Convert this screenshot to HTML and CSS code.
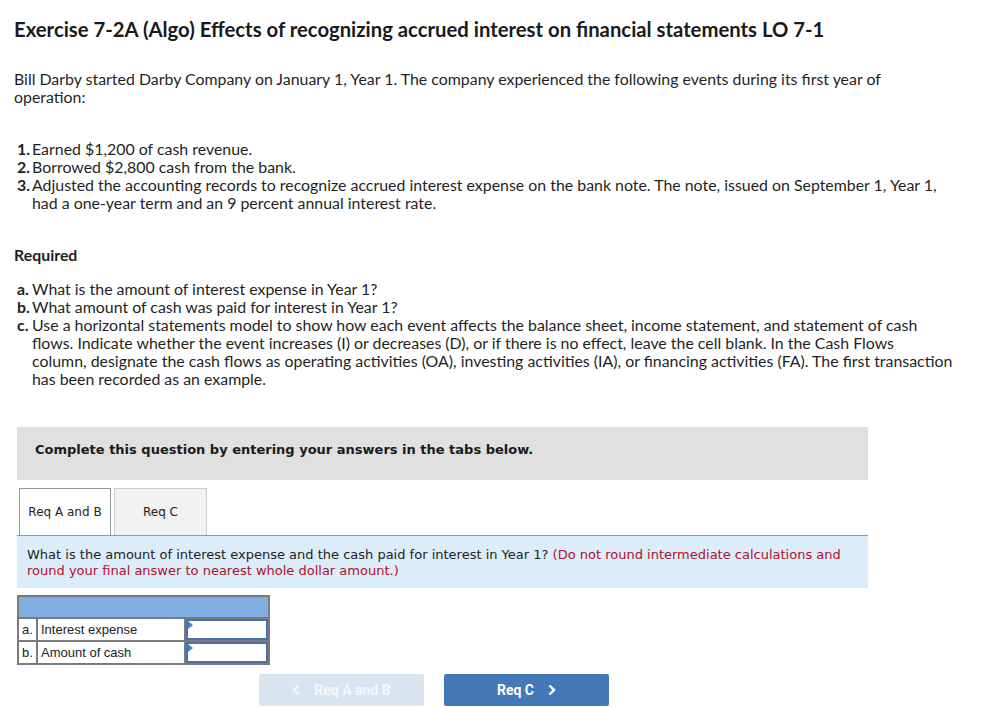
FILE: index.html
```html
<!DOCTYPE html>
<html>
<head>
<meta charset="utf-8">
<link rel="stylesheet" href="styles.css">
</head>
<body>
<div class="page">
  <h1 class="title">Exercise 7-2A (Algo) Effects of recognizing accrued interest on financial statements LO 7-1</h1>
  <p class="intro">Bill Darby started Darby Company on January 1, Year 1. The company experienced the following events during its first year of operation:</p>
  <ol class="events">
    <li><span class="num">1.</span><span class="txt">Earned $1,200 of cash revenue.</span></li>
    <li><span class="num">2.</span><span class="txt">Borrowed $2,800 cash from the bank.</span></li>
    <li><span class="num">3.</span><span class="txt">Adjusted the accounting records to recognize accrued interest expense on the bank note. The note, issued on September 1, Year 1, had a one-year term and an 9 percent annual interest rate.</span></li>
  </ol>
  <h2 class="req">Required</h2>
  <ol class="events reqs">
    <li><span class="num">a.</span><span class="txt">What is the amount of interest expense in Year 1?</span></li>
    <li><span class="num">b.</span><span class="txt">What amount of cash was paid for interest in Year 1?</span></li>
    <li><span class="num">c.</span><span class="txt">Use a horizontal statements model to show how each event affects the balance sheet, income statement, and statement of cash flows. Indicate whether the event increases (I) or decreases (D), or if there is no effect, leave the cell blank. In the Cash Flows column,&nbsp;designate the cash flows as operating activities (OA), investing activities (IA), or financing activities (FA). The first transaction has been recorded as an example.</span></li>
  </ol>

  <div class="work">
    <div class="notice">Complete this question by entering your answers in the tabs below.</div>
    <div class="tabs">
      <div class="tab active">Req A and B</div>
      <div class="tab">Req C</div>
    </div>
    <div class="panel">What is the amount of interest expense and the cash paid for interest in Year 1? <span class="warn">(Do not round intermediate calculations and round your final answer to nearest whole dollar amount.)</span></div>
    <table class="grid">
      <colgroup><col class="c1"><col class="c2"><col class="c3"></colgroup>
      <tr class="head"><td colspan="3"></td></tr>
      <tr><td class="let">a.</td><td class="lab">Interest expense</td><td class="inp"><span class="field"></span></td></tr>
      <tr><td class="let">b.</td><td class="lab">Amount of cash</td><td class="inp"><span class="field"></span></td></tr>
    </table>
    <div class="nav">
      <div class="btn prev"><svg class="chev" width="8" height="12" viewBox="0 0 8 12"><path d="M6.5 1.5 L2 6 L6.5 10.5" fill="none" stroke="currentColor" stroke-width="2.4"/></svg>Req A and B</div>
      <div class="btn next">Req C<svg class="chev" width="8" height="12" viewBox="0 0 8 12"><path d="M1.5 1.5 L6 6 L1.5 10.5" fill="none" stroke="currentColor" stroke-width="2.4"/></svg></div>
    </div>
  </div>
</div>
</body>
</html>
```

FILE: styles.css
```css
html, body { margin: 0; padding: 0; background: #fff; }
body { font-family: "Lato", "Noto Sans", sans-serif; color: #1f1f1f; font-size: 15.9px; line-height: 18px; }
.page { padding: 0 0 0 14px; width: 970px; box-sizing: border-box; }
.title { font-size: 20.3px; font-weight: 700; line-height: 24px; margin: 0; padding-top: 17px; color: #1a1a1a; }
.intro { margin: 29px 0 0; width: 900px; }
.events { list-style: none; margin: 34px 0 0; padding: 0 0 0 3px; width: 938px; }
.events li { display: flex; }
.events .num { width: 15px; flex: none; font-weight: 700; }
.events .txt { flex: 1; }
.req { font-size: 15.9px; font-weight: 700; margin: 34px 0 0; line-height: 18px; }
.reqs { margin-top: 16px; }
.work { margin-top: 39px; margin-left: 3px; width: 851px; }
.notice { background: #e0e0e0; height: 53px; box-sizing: border-box; padding: 14px 0 0 18px; font-family: "DejaVu Sans", Verdana, sans-serif; font-weight: 700; font-size: 13px; color: #1a1a1a; }
.tabs { display: flex; gap: 3px; margin-top: 8px; padding-left: 2px; border-bottom: 1px solid #999; font-family: "DejaVu Sans", Verdana, sans-serif; font-size: 12px; }
.tab { height: 47px; box-sizing: border-box; display: flex; align-items: center; justify-content: center; border: 1px solid #ccc; border-bottom: none; background: #f2f2f2; color: #222; width: 93px; }
.tab.active { background: #fff; border: 1px solid #999; border-bottom: none; width: 92px; }
.panel { background: #dcedf9; padding: 11px 18px 9px 10px; font-family: "DejaVu Sans", Verdana, sans-serif; font-size: 13px; line-height: 16px; color: #222; }
.warn { color: #b0102c; }
.grid { border-collapse: collapse; table-layout: fixed; width: 251px; margin-top: 7px; font-family: "Liberation Sans", Arial, sans-serif; font-size: 13px; color: #222; }
.grid .c1 { width: 19px; }
.grid .c2 { width: 148px; }
.grid .c3 { width: 84px; }
.grid td { border: 2px solid #7a7a7a; height: 21px; padding: 0 3px; box-sizing: content-box; }
.grid .head td { background: #7eaee2; height: 20px; }
.grid .inp { padding: 0; position: relative; }
.field { display: block; border: 2px solid #4a72a8; box-sizing: border-box; height: 21px; background: #fff; }
.inp::before { content: ""; position: absolute; left: 2px; top: 2px; border-left: 5px solid #4a80c8; border-top: 4px solid transparent; border-bottom: 4px solid transparent; }
.nav { display: flex; justify-content: center; gap: 20px; width: 851px; margin-left: -17px; padding-left: 17px; box-sizing: border-box; margin-top: 9px; }
.btn { width: 165px; height: 32px; border-radius: 2px; display: flex; align-items: center; justify-content: center; gap: 14px; font-family: Roboto, "Liberation Sans", sans-serif; font-weight: 700; font-size: 14px; color: #fff; }
.btn.prev { background: #d8e4f0; color: #f4f8fb; }
.btn.next { background: #4478b8; }
.chev { display: block; flex: none; }
```
